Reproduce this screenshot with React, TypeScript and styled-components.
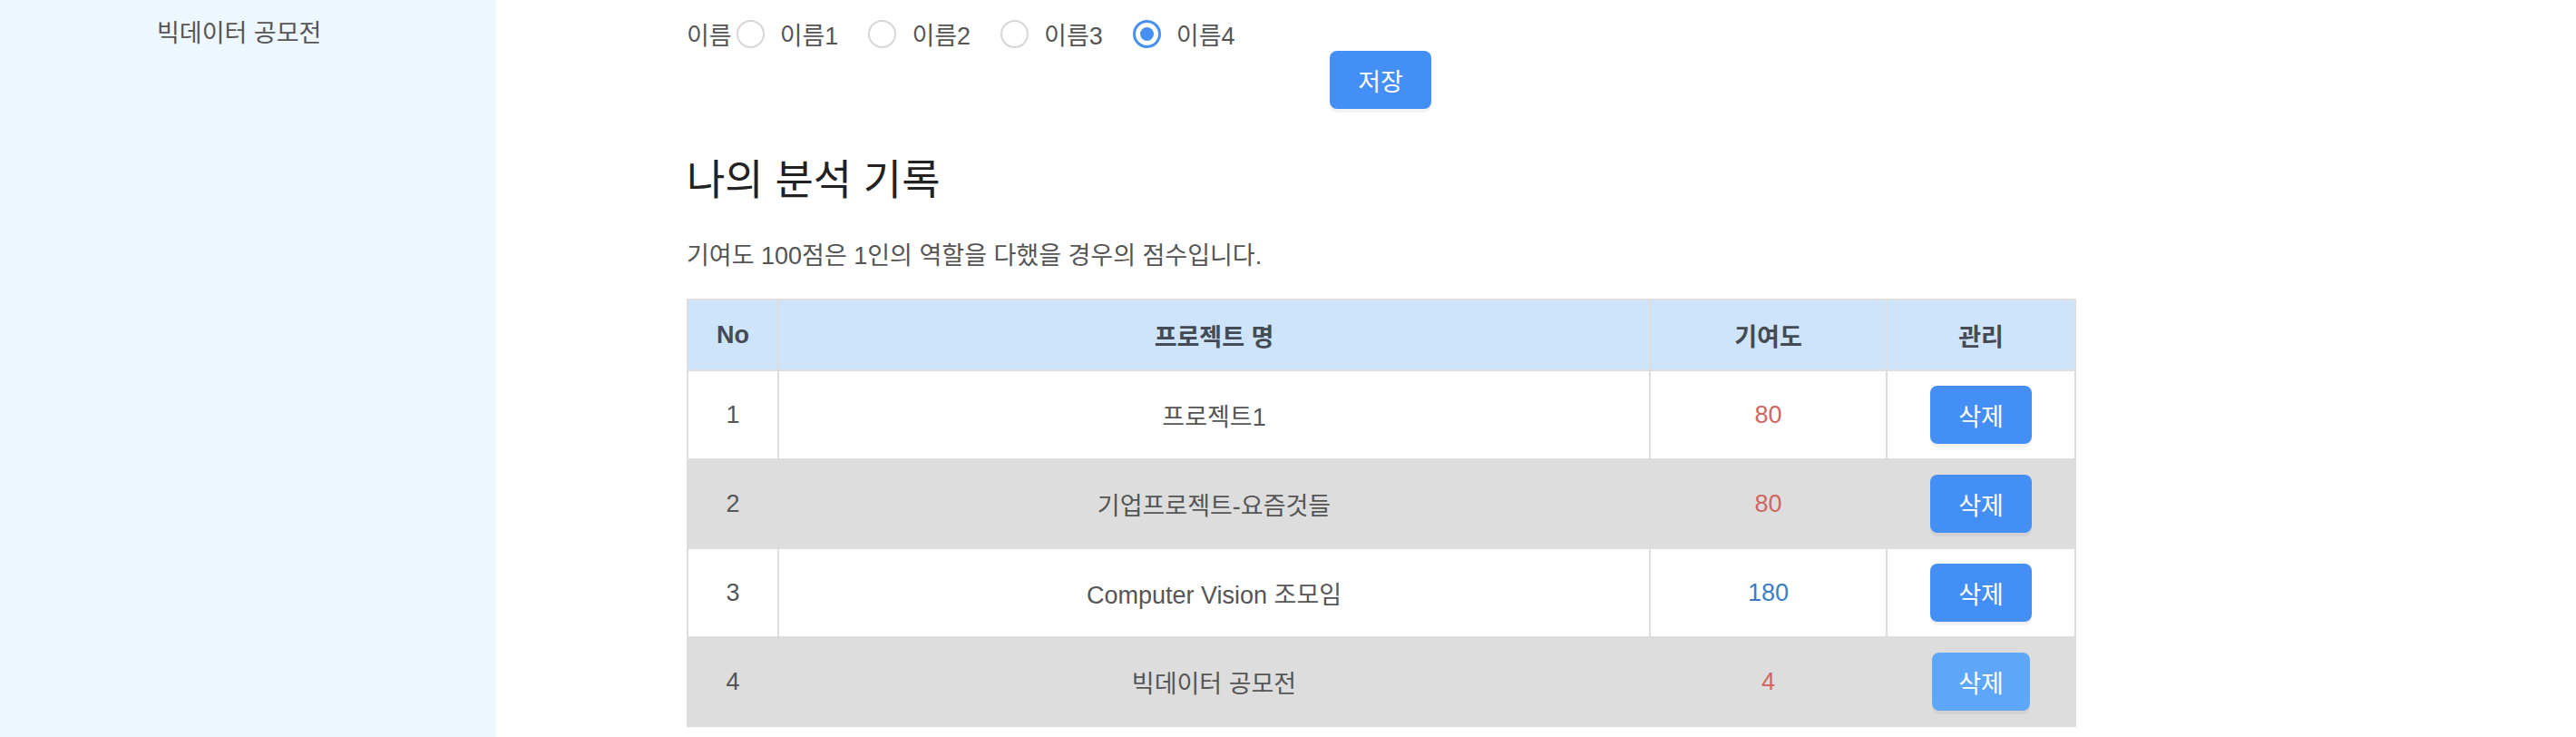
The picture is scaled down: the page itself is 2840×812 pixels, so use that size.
import React, { useState } from 'react';
import styled, { createGlobalStyle } from 'styled-components';

const GlobalStyle = createGlobalStyle`
    body {
        margin: 0;
        font-family: "Liberation Sans", "Noto Sans CJK KR", sans-serif;
        color: #555;
        background: #fff;
    }
`;

const Page = styled.div`
    display: flex;
    height: 100vh;
    overflow: hidden;
`;

const Sidebar = styled.aside`
    width: 547px;
    flex-shrink: 0;
    background-color: #eef6fe;
    padding: 17px 0 0 173px;
    box-sizing: border-box;
`;

const SideItem = styled.div`
    font-size: 27px;
    line-height: 40px;
    color: #555;
`;

const Main = styled.main`
    flex-grow: 1;
    padding: 0 0 0 210px;
`;

const Content = styled.div`
    width: 1530px;
    display: flex;
    flex-direction: column;
`;

const RadioRow = styled.div`
    display: flex;
    align-items: center;
    height: 40px;
    margin-top: 17px;
    font-size: 27px;
    color: #555;
`;

const RadioLabel = styled.label`
    display: flex;
    align-items: center;
    margin-right: 28px;
    cursor: pointer;
`;

const RadioInput = styled.input`
    appearance: none;
    margin: 0 17px 0 5px;
    width: 31px;
    height: 31px;
    border-radius: 50%;
    border: 2px solid #d6d6d6;
    box-sizing: border-box;
    display: grid;
    place-content: center;

    &:checked {
        border: 3px solid #4790f3;
    }

    &:checked::before {
        content: '';
        width: 15px;
        height: 15px;
        border-radius: 50%;
        background: #4790f3;
    }
`;

const SaveButton = styled.button`
    align-self: center;
    margin-top: -1px;
    width: 112px;
    height: 64px;
    border: none;
    border-radius: 8px;
    background-color: #448ff6;
    color: #fff;
    font-family: inherit;
    font-size: 27px;
    box-shadow: 0 4px 0 rgba(0, 0, 0, 0.05);
    cursor: pointer;
`;

const Title = styled.h2`
    margin: 46px 0 0;
    font-size: 46px;
    font-weight: 400;
    color: #222;
    line-height: 64px;
`;

const Description = styled.p`
    margin: 32px 0 0;
    font-size: 27px;
    line-height: 40px;
    color: #555;
`;

const Table = styled.table`
    margin-top: 27px;
    width: 1530px;
    border-collapse: collapse;
    table-layout: fixed;
    font-size: 27px;
`;

const HeadCell = styled.th`
    height: 74px;
    background-color: #cde4fb;
    border: 2px solid #ddd;
    color: #454b55;
    font-weight: 700;
    text-align: center;
`;

const Row = styled.tr<{ striped: boolean }>`
    background-color: ${(p) => (p.striped ? '#ddd' : '#fff')};
`;

const Cell = styled.td`
    height: 94px;
    border: 2px solid #ddd;
    text-align: center;
    color: #555;
`;

const Score = styled.span<{ high: boolean }>`
    color: ${(p) => (p.high ? '#3b7dc4' : '#cf6662')};
`;

const DeleteButton = styled.button<{ hovered: boolean }>`
    width: ${(p) => (p.hovered ? '108px' : '112px')};
    height: 64px;
    border: none;
    border-radius: 8px;
    background-color: ${(p) => (p.hovered ? '#5ea6f7' : '#448ff6')};
    color: #fff;
    font-family: inherit;
    font-size: 27px;
    box-shadow: 0 4px 0 rgba(0, 0, 0, 0.05);
    cursor: pointer;
`;

const names = ['이름1', '이름2', '이름3', '이름4'];

const records = [
    { no: 1, name: '프로젝트1', score: 80 },
    { no: 2, name: '기업프로젝트-요즘것들', score: 80 },
    { no: 3, name: 'Computer Vision 조모임', score: 180 },
    { no: 4, name: '빅데이터 공모전', score: 4 },
];

const App: React.FC = () => {
    const [selected, setSelected] = useState('이름4');

    return (
        <Page>
            <GlobalStyle />
            <Sidebar>
                <SideItem>빅데이터 공모전</SideItem>
            </Sidebar>
            <Main>
                <Content>
                    <RadioRow>
                        이름
                        {names.map((n) => (
                            <RadioLabel key={n}>
                                <RadioInput
                                    type="radio"
                                    name="member"
                                    checked={selected === n}
                                    onChange={() => setSelected(n)}
                                />
                                {n}
                            </RadioLabel>
                        ))}
                    </RadioRow>
                    <SaveButton>저장</SaveButton>
                    <Title>나의 분석 기록</Title>
                    <Description>기여도 100점은 1인의 역할을 다했을 경우의 점수입니다.</Description>
                    <Table>
                        <colgroup>
                            <col style={{ width: 100 }} />
                            <col style={{ width: 961 }} />
                            <col style={{ width: 261 }} />
                            <col style={{ width: 208 }} />
                        </colgroup>
                        <thead>
                            <tr>
                                <HeadCell>No</HeadCell>
                                <HeadCell>프로젝트 명</HeadCell>
                                <HeadCell>기여도</HeadCell>
                                <HeadCell>관리</HeadCell>
                            </tr>
                        </thead>
                        <tbody>
                            {records.map((r, i) => (
                                <Row key={r.no} striped={i % 2 === 1}>
                                    <Cell>{r.no}</Cell>
                                    <Cell>{r.name}</Cell>
                                    <Cell>
                                        <Score high={r.score >= 100}>{r.score}</Score>
                                    </Cell>
                                    <Cell>
                                        <DeleteButton hovered={r.no === 4}>삭제</DeleteButton>
                                    </Cell>
                                </Row>
                            ))}
                        </tbody>
                    </Table>
                </Content>
            </Main>
        </Page>
    );
};

export default App;
